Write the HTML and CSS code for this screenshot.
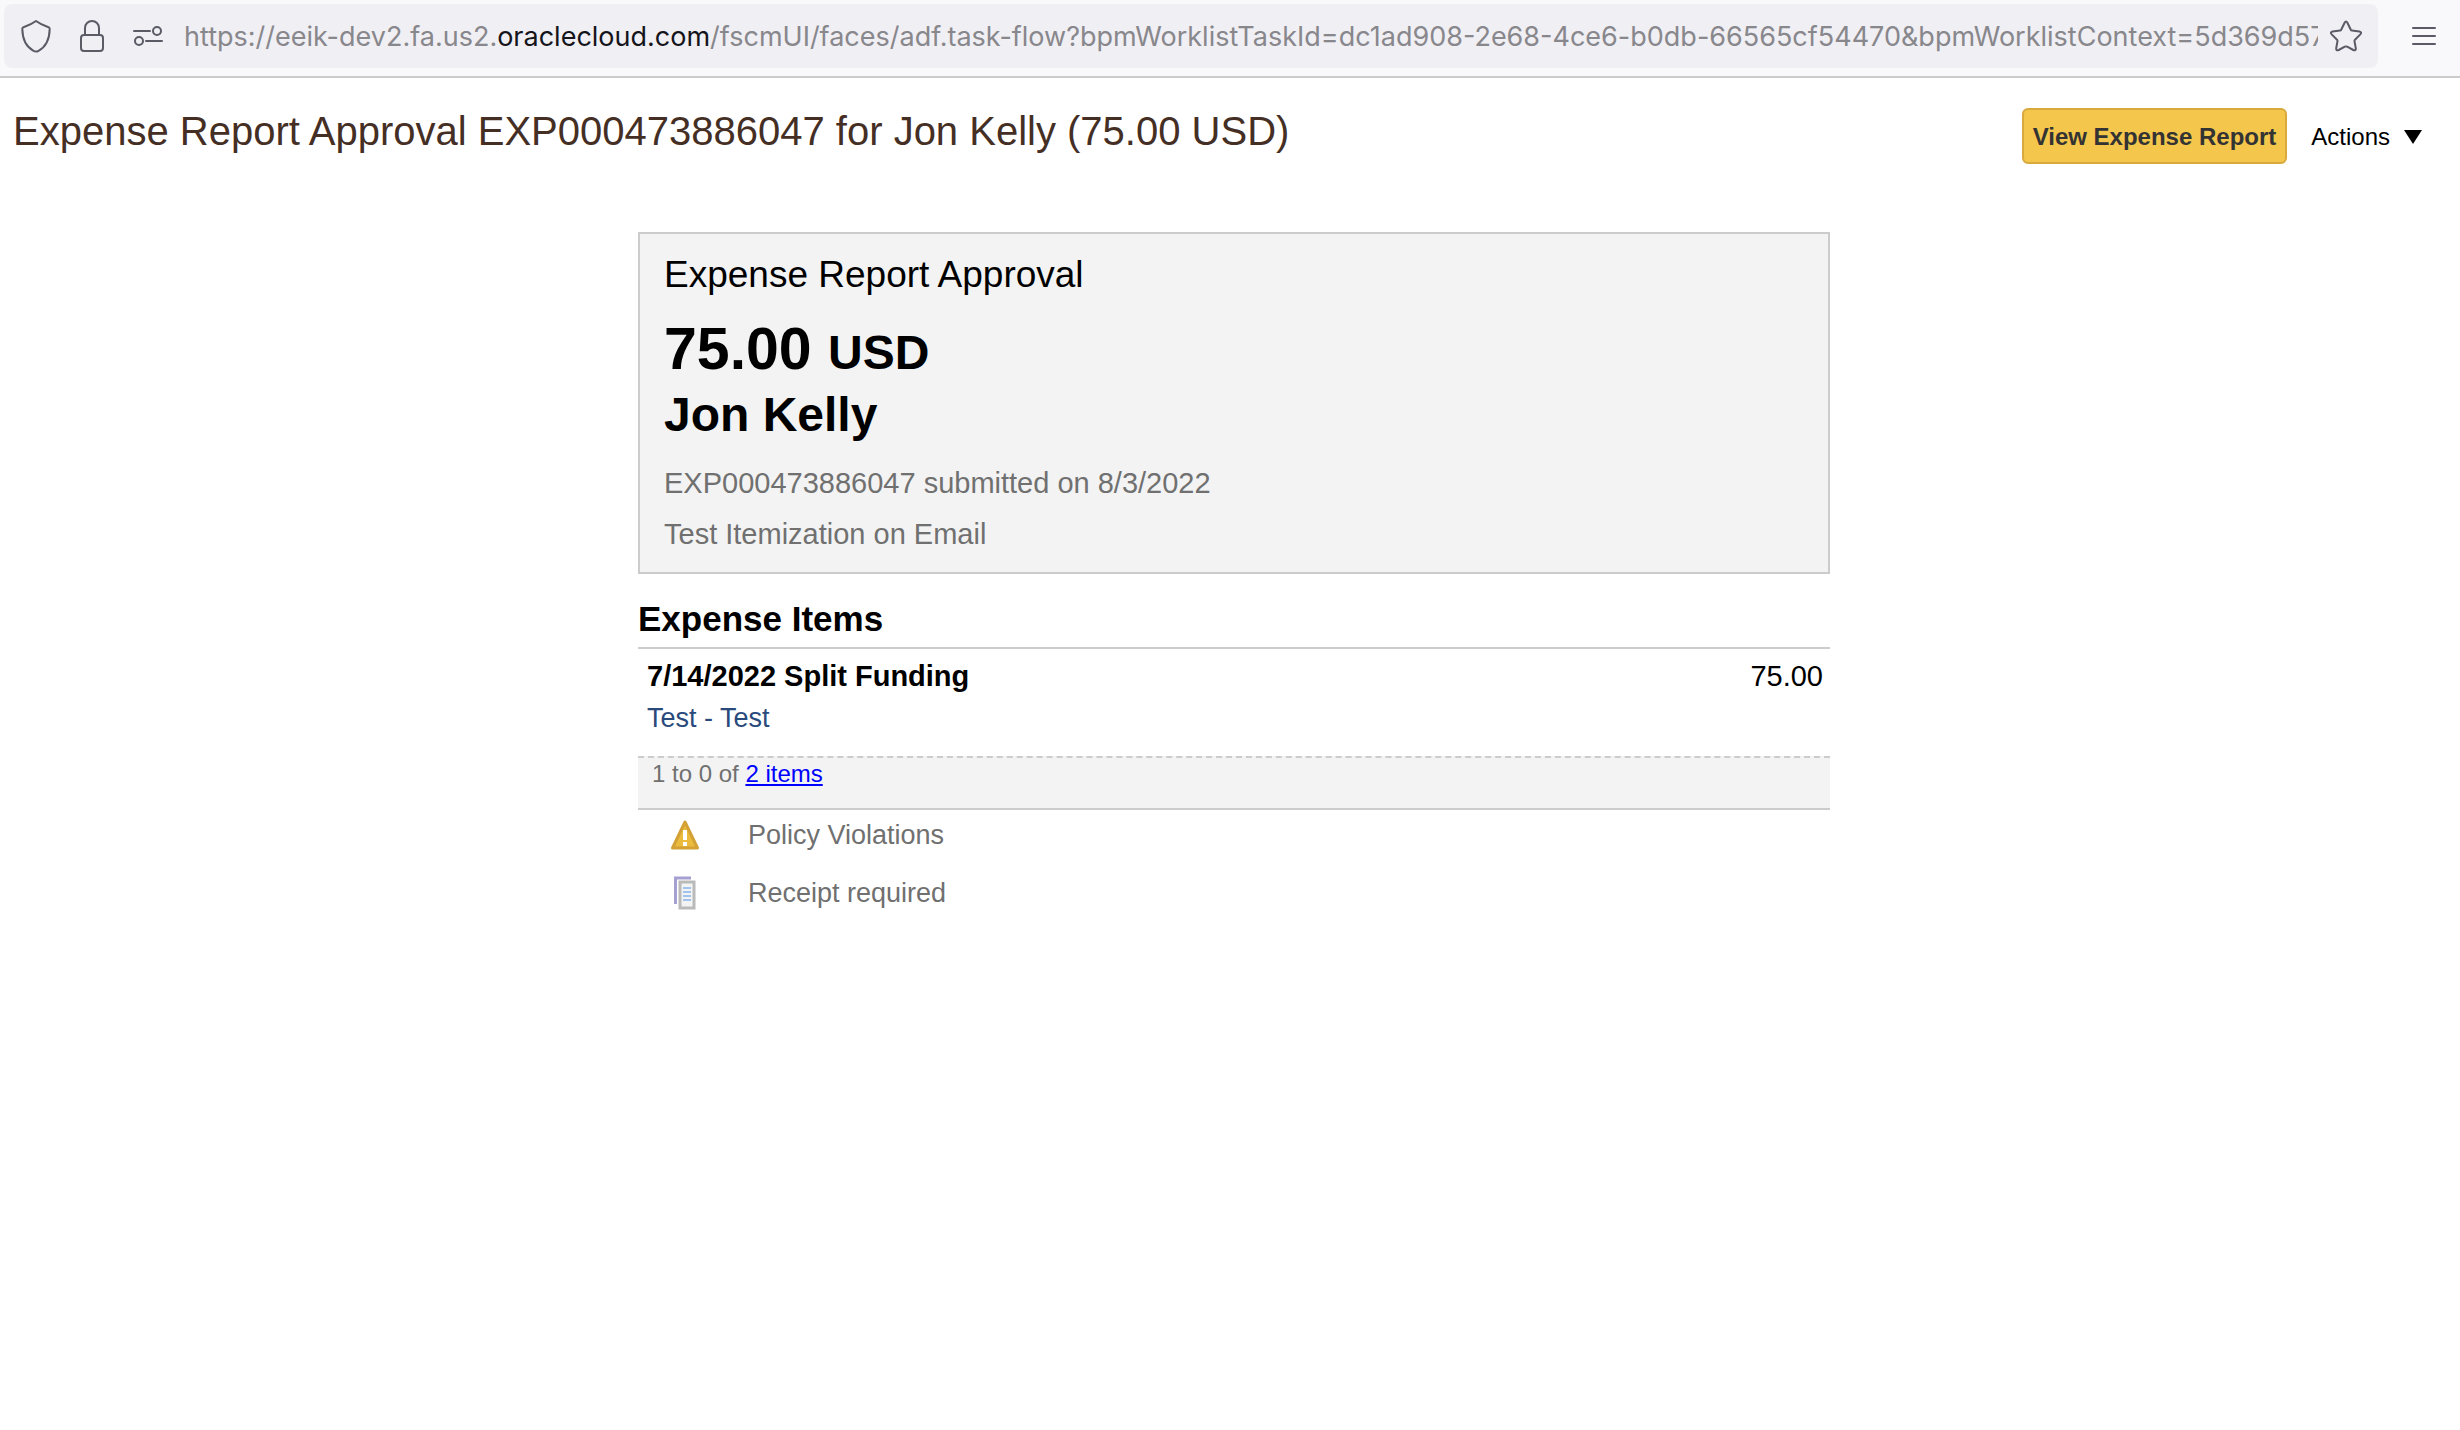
FILE: index.html
```html
<!DOCTYPE html>
<html lang="en">

<head>
    <meta charset="utf-8">
    <title>Expense Report Approval</title>
    <link rel="stylesheet" href="styles.css">
</head>

<body>
    <div class="toolbar">
        <div class="urlbar">
            <div class="urlbar-icons">
                <svg class="icon" width="32" height="36" viewBox="0 0 32 36">
                    <path d="M16 3 C12 6 7 8 3.500 9.200 Q2.300 9.700 2.300 11 C2.500 22 6.500 29 13.500 32.800 Q16 34.200 18.500 32.800 C25.500 29 29.500 22 29.700 11 Q29.700 9.700 28.500 9.200 C25 8 20 6 16 3 Z" />
                </svg>
                <svg class="icon" width="28" height="36" viewBox="0 0 28 36">
                    <path d="M7 17 V10 a7 7 0 0 1 14 0 V17" />
                    <rect x="3" y="17" width="22" height="16" rx="3" />
                </svg>
                <svg class="icon" width="32" height="36" viewBox="0 0 32 36">
                    <path d="M2 13 H18 M14 23 H30" />
                    <circle cx="25" cy="13" r="4" />
                    <circle cx="7" cy="23" r="4" />
                </svg>
            </div>
            <div class="urlbar-input" role="textbox" aria-label="Address" contenteditable="true" spellcheck="false">https://eeik-dev2.fa.us2.<span class="urlbar-domain">oraclecloud.com</span>/fscmUI/faces/adf.task-flow?bpmWorklistTaskId=dc1ad908-2e68-4ce6-b0db-66565cf54470&amp;bpmWorklistContext=5d369d57</div>
            <button class="icon-button" aria-label="Bookmark this page">
                <svg class="icon" width="36" height="36" viewBox="0 0 36 36">
                    <path d="M16.600 4.800 Q18 2.200 19.400 4.800 L22.800 11.700 Q23.200 12.500 24 12.600 L31.400 13.600 Q34.300 14.200 32.300 16.400 L27 21.700 Q26.300 22.400 26.500 23.300 L27.800 30.200 Q28 33.200 25.300 32 L19.200 28.700 Q18 28.100 16.800 28.700 L10.700 32 Q8 33.200 8.200 30.200 L9.500 23.300 Q9.700 22.400 9 21.700 L3.700 16.400 Q1.700 14.200 4.600 13.600 L12 12.600 Q12.800 12.500 13.200 11.700 Z" />
                </svg>
            </button>
        </div>
        <button class="icon-button" aria-label="Open application menu">
            <svg class="icon" width="28" height="28" viewBox="0 0 28 28">
                <path d="M3 6 H25 M3 14 H25 M3 22 H25" />
            </svg>
        </button>
    </div>

    <div class="header">
        <h1 class="header-title">Expense Report Approval EXP000473886047 for Jon Kelly (75.00 USD)</h1>
        <div class="header-actions">
            <button class="view-button">View Expense Report</button>
            <button class="actions-button">Actions
                <svg width="18" height="14" viewBox="0 0 18 14">
                    <path d="M0 0 H18 L9 14 Z" />
                </svg>
            </button>
        </div>
    </div>

    <div class="main">
        <div class="summary">
            <h2 class="summary-title">Expense Report Approval</h2>
            <div class="summary-amount">75.00 <span class="summary-currency">USD</span></div>
            <div class="summary-name">Jon Kelly</div>
            <div class="summary-info">EXP000473886047 submitted on 8/3/2022</div>
            <div class="summary-info">Test Itemization on Email</div>
        </div>

        <h3 class="items-title">Expense Items</h3>
        <table class="items">
            <tr>
                <td>
                    <div class="items-name">7/14/2022 Split Funding</div>
                    <div class="items-description">Test - Test</div>
                </td>
                <td class="items-amount">75.00</td>
            </tr>
        </table>
        <div class="paging">1 to 0 of <a href="#">2 items</a></div>

        <div class="legend">
            <div class="legend-row">
                <svg class="legend-icon" width="34" height="34" viewBox="0 0 34 34">
                    <path d="M17 4 L29.500 30 H4.500 Z" fill="#ebbb3d" stroke="#d3a136" stroke-width="3" stroke-linejoin="round" />
                    <path d="M15 12 H19 V22 H15 Z M15 24 H19 V28 H15 Z" fill="#fff" />
                </svg>
                <span>Policy Violations</span>
            </div>
            <div class="legend-row">
                <svg class="legend-icon" width="34" height="34" viewBox="0 0 34 34">
                    <path d="M7.500 28 V2 H23" fill="none" stroke="#a5a0d2" stroke-width="3" />
                    <rect x="12" y="6" width="14" height="26" fill="#f3f3f3" stroke="#bababa" stroke-width="3" />
                    <path d="M15 12 H23 M15 16 H23 M15 20 H23 M15 24 H23" stroke="#9fc3ec" stroke-width="2" />
                </svg>
                <span>Receipt required</span>
            </div>
        </div>
    </div>
</body>

</html>
```

FILE: styles.css
```css
body {
    margin: 0;
    background: #fff;
    color: #000;
    font-family: "Liberation Sans", Arial, Helvetica, sans-serif;
}

button {
    border: none;
    background: none;
    padding: 0;
    font-family: inherit;
    font-size: 24px;
    cursor: pointer;
}

svg {
    display: block;
}

/* browser bar */

.toolbar {
    display: flex;
    align-items: center;
    gap: 32px;
    padding: 4px 22px 8px 4px;
    background: #f9f9fb;
    border-bottom: 2px solid #ccc;
}

.urlbar {
    flex: 1;
    min-width: 0;
    display: flex;
    align-items: center;
    gap: 10px;
    height: 64px;
    padding: 0 14px 0 16px;
    box-sizing: border-box;
    border-radius: 8px;
    background: #f0eff4;
}

.urlbar-icons {
    display: flex;
    gap: 26px;
    margin-right: 10px;
}

.urlbar-input {
    flex: 1;
    min-width: 0;
    padding-top: 2px;
    overflow: hidden;
    white-space: nowrap;
    outline: none;
    color: #88878c;
    font-family: Inter, Roboto, sans-serif;
    font-size: 27px;
    line-height: 36px;
}

.urlbar-domain {
    color: #15141a;
}

.icon {
    fill: none;
    stroke: #5b5b66;
    stroke-width: 2;
    stroke-linecap: round;
    stroke-linejoin: round;
}

/* page header */

.header {
    display: flex;
    justify-content: space-between;
    align-items: flex-start;
    padding: 30px 38px 0 13px;
}

.header-title {
    margin: 0;
    color: #452f25;
    font-size: 40px;
    font-weight: normal;
    line-height: 46px;
}

.header-actions {
    display: flex;
    gap: 24px;
}

.view-button {
    height: 56px;
    padding: 2px 9px 0;
    border: 2px solid #d8a93e;
    border-radius: 6px;
    background: #f4c64c;
    color: #333;
    font-weight: bold;
}

.actions-button {
    display: flex;
    align-items: center;
    gap: 14px;
    padding-top: 2px;
    color: #000;
}

/* approval */

.main {
    max-width: 1192px;
    margin: 0 auto;
    padding: 68px 0 0 8px;
}

.summary {
    padding: 19px 24px 12px;
    border: 2px solid #ccc;
    background: #f3f3f3;
}

.summary-title {
    margin: 0 0 19px;
    font-size: 37px;
    font-weight: normal;
    line-height: 44px;
}

.summary-amount {
    font-size: 59px;
    font-weight: bold;
    line-height: 66px;
}

.summary-currency {
    font-size: 48px;
    line-height: 48px;
}

.summary-name {
    margin: 5px 0 15px;
    font-size: 48px;
    font-weight: bold;
    line-height: 56px;
}

.summary-info {
    color: #707070;
    font-size: 29px;
    line-height: 51px;
}

.items-title {
    margin: 25px 0 0;
    padding-bottom: 8px;
    border-bottom: 2px solid #ccc;
    font-size: 35px;
    line-height: 40px;
}

.items {
    width: 100%;
    border-collapse: collapse;
}

.items td {
    padding: 9px 7px 21px 9px;
    vertical-align: top;
    font-size: 29px;
    line-height: 36px;
}

.items .items-amount {
    text-align: right;
}

.items-name {
    font-weight: bold;
}

.items-description {
    margin-top: 7px;
    color: #2a4a7c;
    font-size: 27px;
    line-height: 34px;
}

.paging {
    padding: 2px 14px 20px;
    border-top: 2px dashed #ccc;
    border-bottom: 2px solid #ccc;
    background: #f3f3f3;
    color: #707070;
    font-size: 24px;
    line-height: 28px;
}

.paging a {
    color: #00f;
}

.legend {
    display: flex;
    flex-direction: column;
    gap: 24px;
    padding: 8px 30px;
    color: #707070;
    font-size: 27px;
    line-height: 34px;
}

.legend-row {
    display: flex;
    align-items: center;
    gap: 46px;
}
```
